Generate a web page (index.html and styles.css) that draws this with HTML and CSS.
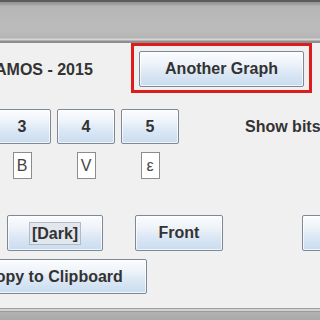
FILE: index.html
```html
<!DOCTYPE html>
<html>
<head>
<meta charset="utf-8">
<link rel="stylesheet" href="styles.css">
</head>
<body>
<div class="window">
  <div class="titlebar"></div>
  <div class="content">
    <div class="row row1">
      <div class="label title">AMOS - 2015</div>
      <div class="highlight">
        <button class="btn btn-graph">Another Graph</button>
      </div>
    </div>
    <div class="row row2">
      <div class="numgroup">
        <button class="btn btn-num">3</button>
        <button class="btn btn-num">4</button>
        <button class="btn btn-num">5</button>
      </div>
      <div class="label bits">Show bits</div>
    </div>
    <div class="row row3">
      <div class="boxgroup">
        <span class="cell"><span class="box">B</span></span>
        <span class="cell"><span class="box">V</span></span>
        <span class="cell"><span class="box">ε</span></span>
      </div>
    </div>
    <div class="row row4">
      <button class="btn btn-dark"><span class="focus">[Dark]</span></button>
      <button class="btn btn-front">Front</button>
      <button class="btn btn-other"></button>
    </div>
    <div class="row row5">
      <button class="btn btn-copy">Copy to Clipboard</button>
    </div>
  </div>
  <div class="bottombar"></div>
</div>
</body>
</html>
```
FILE: styles.css
```css
html, body {
  margin: 0;
  padding: 0;
}
body {
  width: 320px;
  height: 320px;
  overflow: hidden;
  background: #f0f0f0;
  font-family: "Liberation Sans", Arial, sans-serif;
  color: #2e2e2e;
}
.window {
  width: 320px;
  height: 320px;
  display: flex;
  flex-direction: column;
  overflow: hidden;
}
.titlebar {
  height: 43px;
  flex-shrink: 0;
  background: linear-gradient(to bottom,
    #5c5c5c 0, #5c5c5c 2px,
    #939393 2px, #a4a4a4 5px,
    #b6b6b6 6px, #bcbcbc 30px, #b4b4b4 38px,
    #d6d6d6 39px, #d6d6d6 40px,
    #8e8e8e 41px, #8e8e8e 43px);
}
.content {
  height: 265px;
  flex-shrink: 0;
  display: flex;
  flex-direction: column;
  overflow: hidden;
}
.bottombar {
  height: 12px;
  flex-shrink: 0;
  background: linear-gradient(to bottom,
    #a0a0a0 0, #a0a0a0 1px,
    #d2d2d2 1px, #d2d2d2 3px,
    #9a9a9a 3px, #9a9a9a 4px,
    #b2b2b2 4px, #aaaaaa 12px);
}
.row {
  display: flex;
  flex-shrink: 0;
  align-items: center;
}
.label {
  font-weight: bold;
  font-size: 16px;
  white-space: nowrap;
  color: #333;
}
.btn {
  flex-shrink: 0;
  box-sizing: border-box;
  margin: 0;
  padding: 0;
  border: 1px solid #7f8996;
  border-radius: 2px;
  background: linear-gradient(to bottom, #fbfcfe 0%, #eef3f9 35%, #dce8f5 60%, #c9dcf0 100%);
  box-shadow: inset 0 0 0 1px rgba(255,255,255,0.7);
  font-family: "Liberation Sans", Arial, sans-serif;
  font-weight: bold;
  font-size: 16px;
  color: #333;
  white-space: nowrap;
  display: flex;
  align-items: center;
  justify-content: center;
}

/* row 1 */
.row1 {
  height: 50px;
}
.title {
  width: 136px;
  margin-left: -5px;
  flex-shrink: 0;
  margin-top: 3px;
}
.highlight {
  box-sizing: border-box;
  width: 181px;
  height: 50px;
  border: 3px solid #dd1c1c;
  padding: 5px 5px 3px 5px;
  flex-shrink: 0;
}
.btn-graph {
  width: 100%;
  height: 36px;
}

/* row 2 */
.row2 {
  margin-top: 16px;
  height: 35px;
}
.numgroup {
  display: flex;
  gap: 6px;
  margin-left: -7px;
  flex-shrink: 0;
}
.btn-num {
  width: 58px;
  height: 35px;
}
.bits {
  margin-left: 66px;
}

/* row 3 */
.row3 {
  margin-top: 8px;
  height: 27px;
}
.boxgroup {
  display: grid;
  grid-template-columns: repeat(3, 58px);
  gap: 6px;
  margin-left: -7px;
}
.cell {
  display: flex;
  justify-content: center;
}
.box {
  box-sizing: border-box;
  width: 19px;
  height: 27px;
  background: #fff;
  border: 1px solid #8c8c8c;
  font-size: 16px;
  color: #444;
  display: flex;
  align-items: center;
  justify-content: center;
}

/* row 4 */
.row4 {
  margin-top: 36px;
  height: 36px;
}
.btn-dark {
  width: 96px;
  height: 36px;
  margin-left: 7px;
}
.focus {
  box-sizing: border-box;
  padding: 1px 2px;
  height: 23px;
  line-height: 20px;
  border: 1px solid #b3bac6;
  background: #e2e7ee;
}
.btn-front {
  width: 88px;
  height: 36px;
  margin-left: 32px;
}
.btn-other {
  width: 60px;
  height: 36px;
  margin-left: 79px;
}

/* row 5 */
.row5 {
  margin-top: 8px;
  height: 35px;
}
.btn-copy {
  width: 187px;
  height: 35px;
  margin-left: -40px;
}
```
